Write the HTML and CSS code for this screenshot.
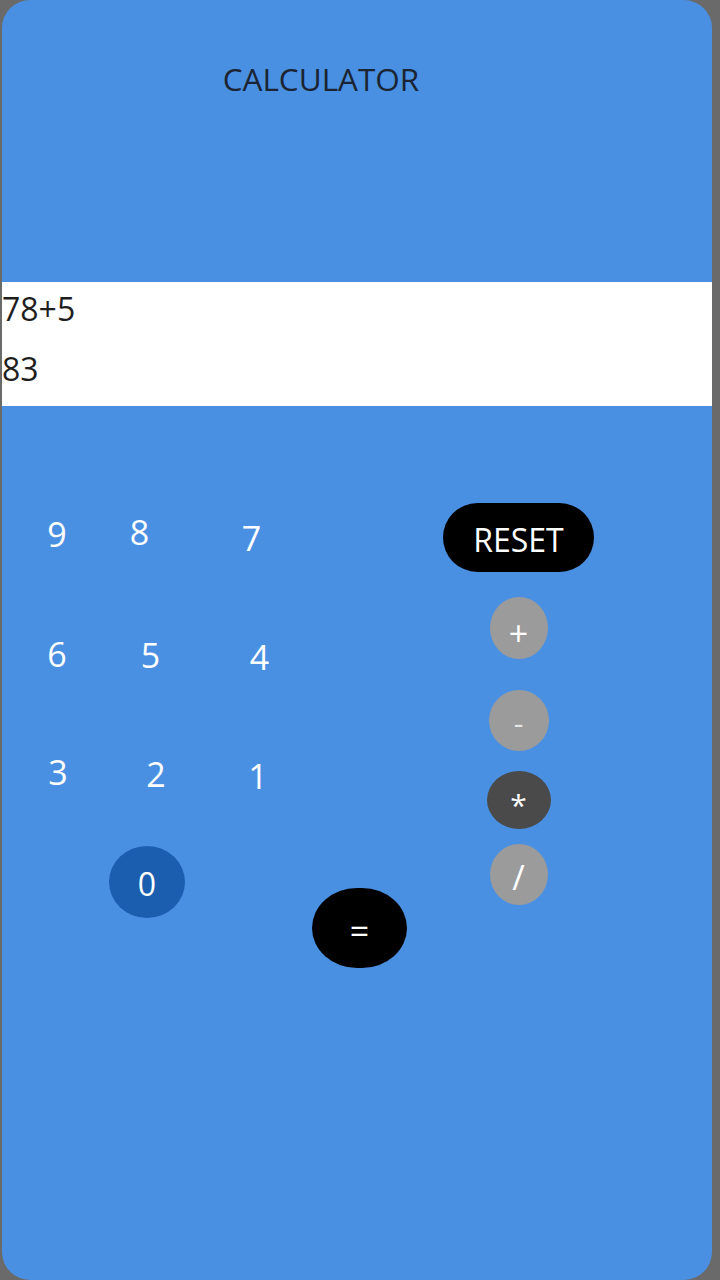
FILE: index.html
```html
<!DOCTYPE html>
<html lang="en">
<head>
<meta charset="utf-8">
<title>Calculator</title>
<link rel="stylesheet" href="styles.css">
</head>
<body>
<div class="phone">
  <header class="header">
    <h1 class="title">CALCULATOR</h1>
  </header>
  <section class="display">
    <div class="expr">78+5</div>
    <div class="result">83</div>
  </section>
  <section class="keypad">
    <div class="digits">
      <div class="rows">
        <div class="row">
          <div class="key k9">9</div>
          <div class="key k8">8</div>
          <div class="key k7">7</div>
        </div>
        <div class="row">
          <div class="key k6">6</div>
          <div class="key k5">5</div>
          <div class="key k4">4</div>
        </div>
        <div class="row">
          <div class="key k3">3</div>
          <div class="key k2">2</div>
          <div class="key k1">1</div>
        </div>
      </div>
      <div class="zero-row">
        <div class="zero">0</div>
        <div class="equals">=</div>
      </div>
    </div>
    <div class="ops">
      <div class="reset">RESET</div>
      <div class="op op-plus">+</div>
      <div class="op op-minus">-</div>
      <div class="op op-mul">*</div>
      <div class="op op-div">/</div>
    </div>
  </section>
</div>
</body>
</html>
```
FILE: styles.css
```css
html, body {
  margin: 0;
  padding: 0;
}
body {
  background: #6a6a6a;
  font-family: "Open Sans", "Noto Sans", sans-serif;
  overflow: hidden;
  height: 1280px;
}
.phone {
  width: 710px;
  height: 1280px;
  margin-left: 2px;
  background: #4a90e2;
  border-radius: 28px;
  overflow: hidden;
}
.header {
  height: 282px;
  box-sizing: border-box;
  padding-top: 59px;
  padding-right: 72px;
  text-align: center;
}
.title {
  margin: 0;
  font-size: 31.5px;
  line-height: 40px;
  font-weight: 400;
  color: #1a2433;
}
.display {
  background: #ffffff;
  height: 124px;
  font-size: 32px;
  color: #1e1e1e;
}
.expr {
  line-height: 54px;
}
.result {
  line-height: 54px;
  margin-top: 6px;
}
.keypad {
  display: flex;
  align-items: flex-start;
  margin-top: 96px;
  padding-left: 25px;
}
.digits {
  width: 416px;
  display: flex;
  flex-direction: column;
}
.rows {
  display: flex;
  flex-direction: column;
  gap: 60px;
}
.row {
  display: flex;
  align-items: flex-start;
  height: 60px;
}
.key {
  width: 60px;
  height: 60px;
  line-height: 60px;
  text-align: center;
  font-size: 34px;
  color: #ffffff;
  flex: none;
}
.k9 { margin-top: 1.5px; }
.k8 { margin-left: 22.5px; }
.k7 { margin-left: 52px; margin-top: 5.5px; }
.k6 { margin-top: 1.5px; }
.k5 { margin-left: 33.5px; margin-top: 2.5px; }
.k4 { margin-left: 49px; margin-top: 4.5px; }
.k3 { margin-left: 1px; }
.k2 { margin-left: 38px; margin-top: 2px; }
.k1 { margin-left: 42px; margin-top: 3.5px; }

.zero-row {
  display: flex;
  align-items: flex-start;
  margin-top: 44px;
}
.zero {
  width: 76px;
  height: 72px;
  margin-left: 82px;
  border-radius: 50%;
  background: #1b5eb0;
  color: #ffffff;
  font-size: 32px;
  display: flex;
  align-items: center;
  justify-content: center;
  padding-top: 2px;
  box-sizing: border-box;
}
.equals {
  width: 95px;
  height: 80px;
  margin-left: 127px;
  margin-top: 42px;
  border-radius: 45px / 40px;
  background: #000000;
  color: #ffffff;
  font-size: 34px;
  display: flex;
  align-items: center;
  justify-content: center;
  padding-top: 6px;
  box-sizing: border-box;
}
.ops {
  width: 151px;
  display: flex;
  flex-direction: column;
  align-items: center;
  margin-top: 1px;
}
.reset {
  width: 151px;
  height: 69px;
  border-radius: 35px;
  background: #000000;
  color: #ffffff;
  font-size: 32px;
  display: flex;
  align-items: center;
  justify-content: center;
  padding-top: 3px;
  box-sizing: border-box;
}
.op {
  border-radius: 50%;
  background: #9b9b9b;
  color: #ffffff;
  font-size: 34px;
  display: flex;
  align-items: center;
  justify-content: center;
  box-sizing: border-box;
}
.op-plus {
  width: 58px;
  height: 62px;
  margin-top: 25px;
  padding-top: 10px;
}
.op-minus {
  width: 60px;
  height: 61px;
  margin-top: 31px;
  color: #e6e6e6;
  font-size: 30px;
  padding-top: 4px;
}
.op-mul {
  width: 64px;
  height: 58px;
  margin-top: 20px;
  background: #4a4a4a;
  font-size: 30px;
  padding-top: 8px;
}
.op-div {
  width: 58px;
  height: 61px;
  margin-top: 15px;
  font-size: 34px;
  padding-top: 4px;
}
```
